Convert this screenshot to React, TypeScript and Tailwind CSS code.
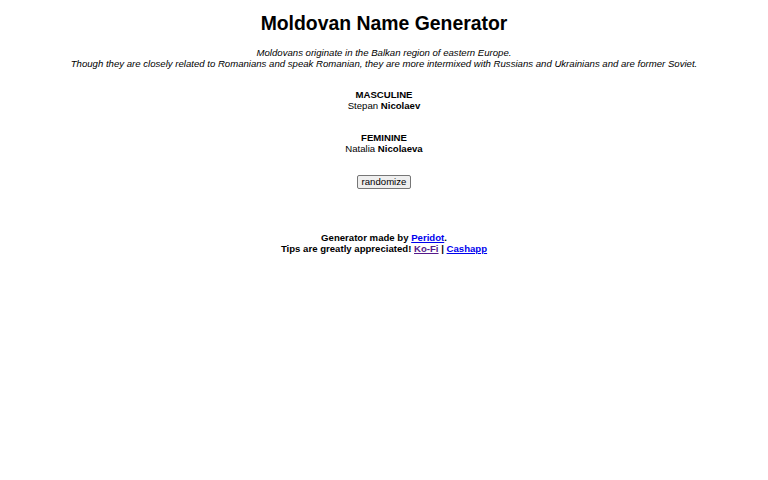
export default function App() {
  return (
    <div className="min-h-[480px] bg-white text-black text-center font-['Liberation_Sans',Arial,sans-serif]">
      <h1 className="pt-[12px] text-[19.4px] leading-[23px] font-bold">Moldovan Name Generator</h1>

      {/* intro */}
      <div className="mt-[13px] text-[9.6px] leading-[10.5px] italic">
        <p>Moldovans originate in the Balkan region of eastern Europe.</p>
        <p>Though they are closely related to Romanians and speak Romanian, they are more intermixed with Russians and Ukrainians and are former Soviet.</p>
      </div>

      {/* names */}
      <div className="mt-[21px] text-[9.6px] leading-[10.5px]">
        <p className="font-bold">MASCULINE</p>
        <p>
          Stepan <b>Nicolaev</b>
        </p>
      </div>
      <div className="mt-[22px] text-[9.6px] leading-[10.5px]">
        <p className="font-bold">FEMININE</p>
        <p>
          Natalia <b>Nicolaeva</b>
        </p>
      </div>

      <div className="mt-[14px]">
        <button className="h-[14px] px-[4px] text-[9.6px] leading-[10px] border border-[#767676] rounded-[2px] bg-[#efefef]">
          randomize
        </button>
      </div>

      {/* footer */}
      <div className="mt-[41px] text-[9.6px] leading-[10.5px] font-bold">
        <p>
          Generator made by <a href="#" className="text-[#0000ee] underline">Peridot</a>.
        </p>
        <p>
          Tips are greatly appreciated! <a href="#" className="text-[#551a8b] underline">Ko-Fi</a> |{' '}
          <a href="#" className="text-[#0000ee] underline">Cashapp</a>
        </p>
      </div>
    </div>
  );
}
